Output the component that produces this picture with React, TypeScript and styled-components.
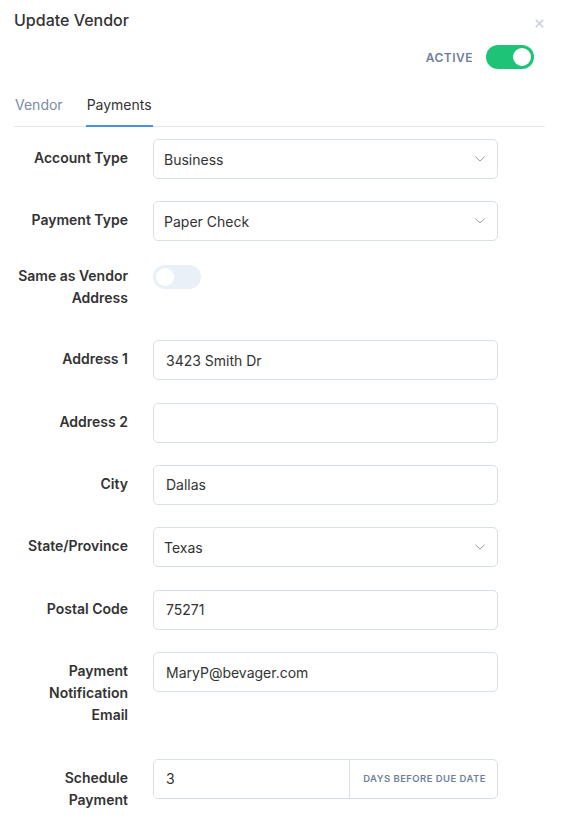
import React, {useState} from 'react';
import styled, {createGlobalStyle} from 'styled-components';

const GlobalStyle = createGlobalStyle`
  html, body {
    margin: 0;
    padding: 0;
    background: #ffffff;
  }
  body {
    font-family: Inter, 'Noto Sans', 'Liberation Sans', sans-serif;
    color: #333333;
  }
  * {
    box-sizing: border-box;
  }
`;

type Field = {
  label: string;
  kind: 'select' | 'text' | 'toggle' | 'days';
  value?: string;
};

const fields: Field[] = [
  {label: 'Account Type', kind: 'select', value: 'Business'},
  {label: 'Payment Type', kind: 'select', value: 'Paper Check'},
  {label: 'Same as Vendor Address', kind: 'toggle'},
  {label: 'Address 1', kind: 'text', value: '3423 Smith Dr'},
  {label: 'Address 2', kind: 'text', value: ''},
  {label: 'City', kind: 'text', value: 'Dallas'},
  {label: 'State/Province', kind: 'select', value: 'Texas'},
  {label: 'Postal Code', kind: 'text', value: '75271'},
  {label: 'Payment Notification Email', kind: 'text', value: 'MaryP@bevager.com'},
  {label: 'Schedule Payment', kind: 'days', value: '3'},
];

function Chevron() {
  return (
    <svg width="10" height="6" viewBox="0 0 10 6" fill="none">
      <polyline points="0.5,0.8 5,5 9.5,0.8" stroke="#8e9aab" strokeWidth="1" />
    </svg>
  );
}

function CloseIcon() {
  return (
    <svg width="9" height="9" viewBox="0 0 9 9" fill="none">
      <line x1="0.8" y1="0.8" x2="8.2" y2="8.2" stroke="#c6cfda" strokeWidth="1.6" />
      <line x1="8.2" y1="0.8" x2="0.8" y2="8.2" stroke="#c6cfda" strokeWidth="1.6" />
    </svg>
  );
}

export default function App() {
  const [active, setActive] = useState(true);
  const [sameAddress, setSameAddress] = useState(false);
  const [tab, setTab] = useState('payments');

  return (
    <Panel>
      <GlobalStyle />
      <Header>
        <Title>Update Vendor</Title>
        <CloseButton aria-label="Close">
          <CloseIcon />
        </CloseButton>
      </Header>
      <StatusRow>
        <StatusLabel>Active</StatusLabel>
        <Switch $on={active} onClick={() => setActive(!active)} />
      </StatusRow>
      <TabBar>
        <Tab $active={tab === 'vendor'} onClick={() => setTab('vendor')}>
          Vendor
        </Tab>
        <Tab $active={tab === 'payments'} onClick={() => setTab('payments')}>
          Payments
        </Tab>
      </TabBar>
      <Form>
        {fields.map((f) => (
          <Row key={f.label}>
            <Label $flat={f.kind === 'toggle'}>{f.label}</Label>
            {f.kind === 'select' && (
              <SelectBox>
                <span>{f.value}</span>
                <Chevron />
              </SelectBox>
            )}
            {f.kind === 'text' && <TextInput defaultValue={f.value} />}
            {f.kind === 'toggle' && (
              <SwitchCell>
                <Switch $on={sameAddress} onClick={() => setSameAddress(!sameAddress)} />
              </SwitchCell>
            )}
            {f.kind === 'days' && (
              <InputGroup>
                <GroupInput defaultValue={f.value} />
                <Addon>Days before due date</Addon>
              </InputGroup>
            )}
          </Row>
        ))}
      </Form>
    </Panel>
  );
}

const Panel = styled.div`
  width: 563px;
  min-height: 820px;
  padding: 8px 18px 0 14px;
`;

const Header = styled.div`
  display: flex;
  justify-content: space-between;
  align-items: flex-start;
`;

const Title = styled.h1`
  margin: 0;
  font-size: 16px;
  line-height: 24px;
  font-weight: 500;
  color: #333333;
`;

const CloseButton = styled.button`
  border: none;
  background: none;
  padding: 0;
  margin: 11px 1px 0 0;
  display: flex;
  cursor: pointer;
`;

const StatusRow = styled.div`
  display: flex;
  justify-content: flex-end;
  align-items: center;
  gap: 13px;
  margin-top: 13px;
  padding-right: 11px;
`;

const StatusLabel = styled.span`
  font-size: 12px;
  font-weight: 600;
  letter-spacing: 0.5px;
  text-transform: uppercase;
  color: #6f7f9d;
`;

const Switch = styled.button<{$on: boolean}>`
  position: relative;
  width: 48px;
  height: 24px;
  border: none;
  border-radius: 12px;
  padding: 0;
  cursor: pointer;
  background: ${(p) => (p.$on ? '#1fc378' : '#e9f0f8')};
  &::after {
    content: '';
    position: absolute;
    top: 3px;
    left: ${(p) => (p.$on ? '27px' : '3px')};
    width: 18px;
    height: 18px;
    border-radius: 50%;
    background: #ffffff;
  }
`;

const TabBar = styled.div`
  display: flex;
  gap: 22px;
  margin-top: 16px;
  border-bottom: 1px solid #e1e7ef;
`;

const Tab = styled.button<{$active: boolean}>`
  border: none;
  background: none;
  font-family: inherit;
  font-size: 14px;
  line-height: 20px;
  padding: 10px 1px 10px;
  margin-bottom: -1px;
  cursor: pointer;
  color: ${(p) => (p.$active ? '#333333' : '#7b8ca6')};
  border-bottom: 2px solid ${(p) => (p.$active ? '#4a90e2' : 'transparent')};
`;

const Form = styled.div`
  display: flex;
  flex-direction: column;
  gap: 22.4px;
  margin-top: 12px;
`;

const Row = styled.div`
  display: grid;
  grid-template-columns: 114px 345px;
  column-gap: 25px;
  align-items: start;
`;

const Label = styled.label<{$flat?: boolean}>`
  text-align: right;
  font-size: 14px;
  line-height: 22px;
  font-weight: 600;
  color: #333333;
  padding: ${(p) => (p.$flat ? '1px 0 9px' : '8px 0 10px')};
`;

const fieldBox = `
  height: 40px;
  border: 1px solid #d7e0eb;
  border-radius: 5px;
  background: #ffffff;
  font-family: Inter, 'Noto Sans', 'Liberation Sans', sans-serif;
  font-size: 14px;
  color: #333333;
`;

const SelectBox = styled.div`
  ${fieldBox}
  display: flex;
  align-items: center;
  justify-content: space-between;
  padding: 0 12px 0 10px;
`;

const TextInput = styled.input`
  ${fieldBox}
  width: 100%;
  padding: 0 12px;
  outline: none;
`;

const SwitchCell = styled.div`
  padding-top: 1px;
`;

const InputGroup = styled.div`
  ${fieldBox}
  display: flex;
  overflow: hidden;
`;

const GroupInput = styled.input`
  flex: 1;
  min-width: 0;
  border: none;
  outline: none;
  padding: 0 12px;
  font-family: inherit;
  font-size: 14px;
  color: #333333;
`;

const Addon = styled.span`
  display: flex;
  align-items: center;
  padding: 0 11px 0 13px;
  border-left: 1px solid #d7e0eb;
  font-size: 9.5px;
  font-weight: 600;
  letter-spacing: 0.45px;
  text-transform: uppercase;
  color: #6f7f9d;
`;
